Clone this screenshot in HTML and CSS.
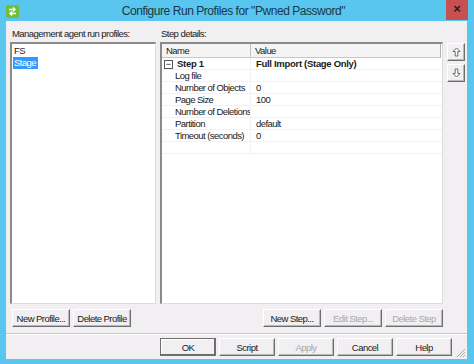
FILE: index.html
```html
<!DOCTYPE html>
<html>
<head>
<meta charset="utf-8">
<link rel="stylesheet" href="styles.css">
</head>
<body>
<div class="window">
  <div class="titlebar">
    <div class="appicon">
      <svg width="13" height="13" viewBox="0 0 13 13">
        <rect x="0" y="0" width="13" height="13" rx="2" fill="#6fbf3a"/>
        <path d="M3 4.5h6M7 2.5l2 2-2 2" stroke="#fff" stroke-width="1.4" fill="none"/>
        <path d="M10 8.5H4M6 6.5l-2 2 2 2" stroke="#fff" stroke-width="1.4" fill="none"/>
      </svg>
    </div>
    <div class="title">Configure Run Profiles for "Pwned Password"</div>
    <div class="close">×</div>
  </div>
  <div class="client">
    <div class="main">
      <div class="lbl lbl-left">Management agent run profiles:</div>
      <div class="lbl lbl-right">Step details:</div>
      <div class="listbox">
        <div class="li">FS</div>
        <div class="li"><span class="sel">Stage</span></div>
      </div>
      <div class="listview">
        <div class="lv-head">
          <div class="hc hc-name">Name</div>
          <div class="hc hc-value">Value</div>
        </div>
        <div class="lv-body">
          <div class="row"><div class="c-name step"><span class="box">−</span>Step 1</div><div class="c-val bold">Full Import (Stage Only)</div></div>
          <div class="row"><div class="c-name">Log file</div><div class="c-val"></div></div>
          <div class="row"><div class="c-name">Number of Objects</div><div class="c-val">0</div></div>
          <div class="row"><div class="c-name">Page Size</div><div class="c-val">100</div></div>
          <div class="row"><div class="c-name">Number of Deletions</div><div class="c-val"></div></div>
          <div class="row"><div class="c-name">Partition</div><div class="c-val">default</div></div>
          <div class="row"><div class="c-name">Timeout (seconds)</div><div class="c-val">0</div></div>
          <div class="row"><div class="c-name"></div><div class="c-val"></div></div>
        </div>
      </div>
      <div class="arrows">
        <div class="btn arrow">
          <svg width="9" height="10" viewBox="0 0 9 10"><path d="M4.5 1L1 4.5h2.2V9h2.6V4.5H8z" fill="#fff" stroke="#6a6a6a" stroke-width="1"/></svg>
        </div>
        <div class="btn arrow">
          <svg width="9" height="10" viewBox="0 0 9 10"><path d="M4.5 9L1 5.5h2.2V1h2.6v4.5H8z" fill="#fff" stroke="#6a6a6a" stroke-width="1"/></svg>
        </div>
      </div>
      <div class="btnrow-left">
        <div class="btn b-newprofile">New Profile...</div>
        <div class="btn b-delprofile">Delete Profile</div>
      </div>
      <div class="btnrow-right">
        <div class="btn b-step">New Step...</div>
        <div class="btn b-step disabled">Edit Step...</div>
        <div class="btn b-step disabled">Delete Step</div>
      </div>
    </div>
    <div class="sep"></div>
    <div class="footer">
      <div class="btn fb default">OK</div>
      <div class="btn fb">Script</div>
      <div class="btn fb disabled">Apply</div>
      <div class="btn fb">Cancel</div>
      <div class="btn fb">Help</div>
      <div class="grip">
        <svg width="11" height="11" viewBox="0 0 11 11"><path d="M10 2L2 10M10 5L5 10M10 8L8 10" stroke="#a8a8a8" stroke-width="1"/></svg>
      </div>
    </div>
  </div>
</div>
</body>
</html>
```

FILE: styles.css
```css
html, body {
  margin: 0;
  padding: 0;
}
body {
  width: 474px;
  height: 364px;
  overflow: hidden;
  font-family: "Liberation Sans", Arial, sans-serif;
  font-size: 9.5px;
  letter-spacing: -0.55px;
  color: #1a1a1a;
}
.window {
  width: 474px;
  height: 364px;
  background: #58c6ee;
  display: flex;
  flex-direction: column;
}
.titlebar {
  height: 21px;
  display: flex;
  align-items: center;
  position: relative;
}
.appicon {
  width: 13px;
  height: 13px;
  margin-left: 6px;
  margin-top: 1px;
}
.appicon svg { display: block; }
.title {
  flex: 1;
  text-align: center;
  font-size: 12px;
  letter-spacing: -0.45px;
  color: #17364a;
  padding-left: 2px;
  margin-top: 1px;
}
.close {
  width: 22px;
  height: 20px;
  margin-right: 6px;
  align-self: flex-start;
  background: #c75050;
  color: #2a1a1a;
  font-weight: bold;
  font-size: 13px;
  line-height: 18px;
  text-align: center;
  letter-spacing: 0;
}
.client {
  flex: 1;
  margin: 0 7px 5px 6px;
  background: #f1eff2;
  display: flex;
  flex-direction: column;
}
.main {
  display: grid;
  grid-template-columns: 146px 4px 283px 4px 19px;
  grid-template-rows: 21px 262px 5px 18px;
  padding-left: 4px;
}
.lbl {
  padding-top: 7px;
  line-height: 12px;
  white-space: nowrap;
}
.lbl-left { grid-column: 1; grid-row: 1; padding-left: 2px; }
.lbl-right { grid-column: 3; grid-row: 1; padding-left: 1px; }
.listbox {
  grid-column: 1;
  grid-row: 2;
  background: #fff;
  border-top: 2px solid #8a8a8a;
  border-left: 2px solid #8a8a8a;
  border-right: 1px solid #dcdcdc;
  border-bottom: 1px solid #dcdcdc;
  padding: 1px 0 0 1px;
}
.li {
  height: 12px;
  line-height: 12px;
  padding-left: 1px;
}
.sel {
  background: #3399ff;
  color: #fff;
  display: inline-block;
  padding: 0 2px 0 1px;
  margin-left: -1px;
}
.listview {
  grid-column: 3;
  grid-row: 2;
  background: #fff;
  border-top: 2px solid #8a8a8a;
  border-left: 2px solid #8a8a8a;
  border-right: 1px solid #dcdcdc;
  border-bottom: 1px solid #dcdcdc;
  display: flex;
  flex-direction: column;
}
.lv-head {
  display: flex;
  height: 13px;
  width: 279px;
  background: #f4f4f4;
  border-bottom: 1px solid #c8c8c8;
  line-height: 13px;
}
.hc { padding-left: 4px; box-sizing: border-box; }
.hc-name { width: 89px; border-right: 1px solid #c0c0c0; }
.hc-value { flex: 1; border-right: 1px solid #b0b0b0; }
.row {
  display: flex;
  height: 11px;
  line-height: 11px;
  border-bottom: 1px solid #f3f1f3;
}
.c-name {
  width: 89px;
  padding-left: 13px;
  box-sizing: border-box;
  border-right: 1px solid #f3f1f3;
  white-space: nowrap;
  overflow: hidden;
}
.c-name.step { padding-left: 2px; font-weight: bold; letter-spacing: -0.3px; }
.c-val { flex: 1; padding-left: 5px; white-space: nowrap; }
.bold { font-weight: bold; letter-spacing: -0.3px; }
.box {
  display: inline-block;
  width: 7px;
  height: 7px;
  border: 1px solid #555;
  line-height: 6px;
  font-size: 9px;
  text-align: center;
  font-weight: normal;
  margin-right: 4px;
  letter-spacing: 0;
}
.arrows {
  grid-column: 5;
  grid-row: 2;
  display: flex;
  flex-direction: column;
  gap: 3px;
  padding-top: 1px;
}
.btn {
  box-sizing: border-box;
  background: #f1eff2;
  border-top: 1px solid #fff;
  border-left: 1px solid #fff;
  border-right: 1px solid #6e6e6e;
  border-bottom: 1px solid #6e6e6e;
  box-shadow: inset -1px -1px 0 #b8b8b8;
  display: flex;
  align-items: center;
  justify-content: center;
  white-space: nowrap;
  color: #1a1a1a;
}
.arrow { width: 18px; height: 18px; }
.arrow svg { display: block; }
.btnrow-left {
  grid-column: 1;
  grid-row: 4;
  display: flex;
  gap: 3px;
  padding-left: 2px;
}
.b-newprofile { width: 58px; height: 18px; }
.b-delprofile { width: 58px; height: 18px; }
.btnrow-right {
  grid-column: 3;
  grid-row: 4;
  display: flex;
  justify-content: flex-end;
  gap: 3px;
}
.b-step { width: 58px; height: 18px; }
.disabled { color: #a8a8a8; }
.sep {
  margin-top: 6px;
  height: 0;
  border-top: 1px solid #c8c8c8;
  border-bottom: 1px solid #fff;
}
.footer {
  display: flex;
  padding-left: 154px;
  padding-top: 3px;
  gap: 3px;
  position: relative;
  flex: 1;
}
.fb { width: 56px; height: 18px; }
.default {
  border: 1px solid #6e6e6e;
  box-shadow: inset -1px -1px 0 #6e6e6e, inset 1px 1px 0 #fff;
}
.grip {
  position: absolute;
  right: 1px;
  bottom: 1px;
  width: 11px;
  height: 11px;
}
.grip svg { display: block; }
```
